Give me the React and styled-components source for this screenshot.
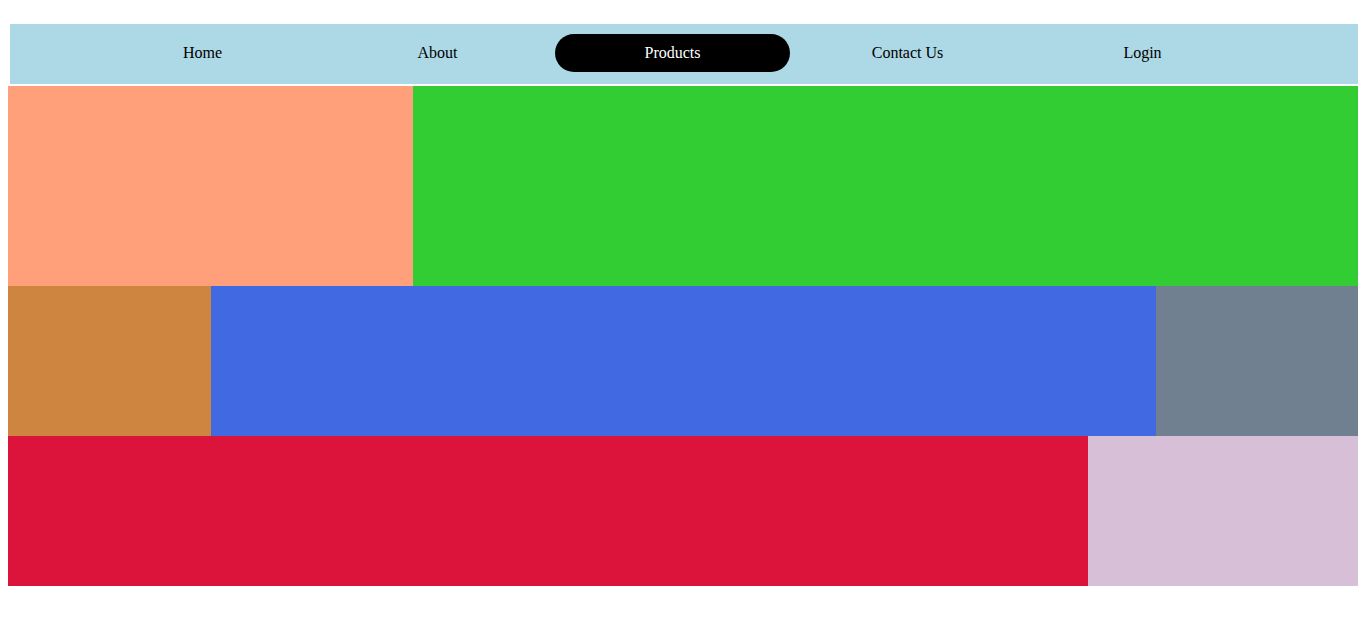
import React from 'react'
import styled, { createGlobalStyle } from 'styled-components'

const GlobalStyle = createGlobalStyle`
  body {
    margin: 8px;
    font-family: "Liberation Serif", "Times New Roman", serif;
    font-size: 16px;
    background: white;
  }
`

const NavBar = styled.ul`
  display: flex;
  align-items: center;
  list-style: none;
  box-sizing: border-box;
  width: 100%;
  height: 60px;
  margin: 16px 0 2px 2px;
  padding: 0 0 2px 75px;
  background-color: lightblue;
`

const NavItem = styled.li`
  display: flex;
  align-items: center;
  justify-content: center;
  width: 235px;
  height: 38px;
  border-radius: 19px;
  background-color: ${(p) => (p.active ? 'black' : 'transparent')};
  color: ${(p) => (p.active ? 'white' : 'black')};
  cursor: pointer;
`

const Row = styled.div`
  display: grid;
  grid-template-columns: ${(p) => p.cols};
  height: ${(p) => p.height};
`

const Block = styled.div`
  background-color: ${(p) => p.color};
`

const links = ['Home', 'About', 'Products', 'Contact Us', 'Login']

const App = () => {
  return (
    <>
      <GlobalStyle />
      <NavBar>
        {links.map((l) => (
          <NavItem key={l} active={l === 'Products' ? 1 : 0}>{l}</NavItem>
        ))}
      </NavBar>
      <Row cols='30% 70%' height='200px'>
        <Block color='lightsalmon' />
        <Block color='limegreen' />
      </Row>
      <Row cols='15% 70% 15%' height='150px'>
        <Block color='peru' />
        <Block color='royalblue' />
        <Block color='slategray' />
      </Row>
      <Row cols='80% 20%' height='150px'>
        <Block color='crimson' />
        <Block color='thistle' />
      </Row>
    </>
  )
}

export default App
